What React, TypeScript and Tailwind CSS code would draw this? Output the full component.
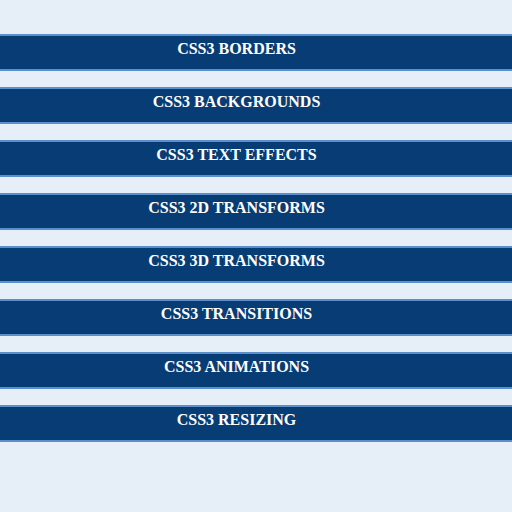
const topics = [
  'CSS3 BORDERS',
  'CSS3 BACKGROUNDS',
  'CSS3 TEXT EFFECTS',
  'CSS3 2D TRANSFORMS',
  'CSS3 3D TRANSFORMS',
  'CSS3 TRANSITIONS',
  'CSS3 ANIMATIONS',
  'CSS3 RESIZING',
];

export default function App() {
  return (
    <div className="min-h-[512px] w-full bg-[#e6eef7] pt-[34px] font-['Liberation_Serif',serif]">
      <ul className="flex flex-col gap-[16px]">
        {topics.map((t) => (
          <li
            key={t}
            className="h-[37px] border-y-2 border-[#5b8fcb] bg-[#083c74] pr-[39px] pt-[4px] text-center text-[16px] font-bold leading-[18px] text-white"
          >
            {t}
          </li>
        ))}
      </ul>
    </div>
  );
}
